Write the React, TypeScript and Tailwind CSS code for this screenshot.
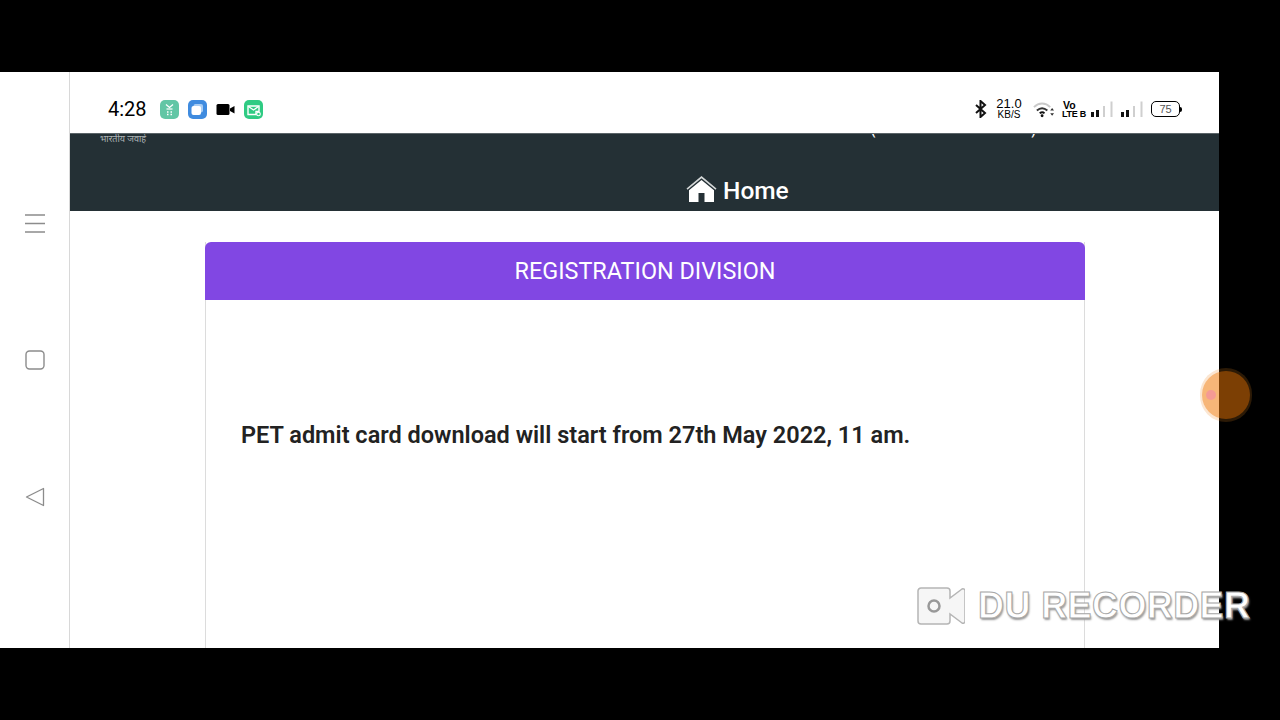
const roboto = "font-['Roboto',sans-serif]";

function AppIcons() {
  return (
    <div className="flex items-center gap-[9px]">
      {/* calculator-ish app */}
      <svg width="19" height="19" viewBox="0 0 19 19">
        <rect width="19" height="19" rx="5" fill="#62c6a5" />
        <path d="M6 4.500l3.500 3 3.500-3" stroke="#fff" strokeWidth="1.300" fill="none" />
        <path d="M6.500 9h6" stroke="#fff" strokeWidth="1.200" />
        <path d="M7 12h1.500M10.500 12H12M7 14.500h1.500M10.500 14.500H12" stroke="#fff" strokeWidth="1.500" />
      </svg>
      <svg width="19" height="19" viewBox="0 0 19 19">
        <rect width="19" height="19" rx="5" fill="#3f8bdf" />
        <rect x="5.500" y="4" width="9.500" height="8.500" rx="2" fill="#a9cdf3" />
        <rect x="3.500" y="6" width="9.500" height="9" rx="2" fill="#fff" />
      </svg>
      <svg width="19" height="19" viewBox="0 0 19 19">
        <rect x="0.500" y="4" width="13" height="11" rx="1.500" fill="#000" />
        <path d="M14 8.500l4.500-2.500v7.500L14 11z" fill="#000" />
      </svg>
      <svg width="19" height="19" viewBox="0 0 19 19">
        <rect width="19" height="19" rx="5" fill="#2fcb83" />
        <path d="M4 6h11v5.500h-3v3H4z" fill="none" stroke="#fff" strokeWidth="1.400" />
        <path d="M4.500 6.500l5 3.500 5-3.500" fill="none" stroke="#fff" strokeWidth="1.300" />
        <circle cx="14.500" cy="14" r="1.800" fill="none" stroke="#fff" strokeWidth="1.100" />
      </svg>
    </div>
  );
}

function Signal() {
  return (
    <svg width="22" height="17" viewBox="0 0 22 17">
      <rect x="0" y="11" width="3" height="5" fill="#111" />
      <rect x="5" y="9" width="3" height="7" fill="#111" />
      <rect x="12" y="5" width="2" height="11" fill="#cfcfcf" />
      <rect x="19.500" y="0.500" width="2" height="15.500" fill="#cfcfcf" />
    </svg>
  );
}

function StatusRight() {
  return (
    <div className="flex items-center">
      <svg width="14" height="18" viewBox="0 0 14 18" className="mr-[8px]">
        <path d="M2 5l9 8-4.500 4V1L11 5l-9 8" fill="none" stroke="#111" strokeWidth="2" />
      </svg>
      <div className="flex flex-col items-center w-[26px] mr-[11px] font-['Liberation_Sans',sans-serif] text-black">
        <span className="text-[13px] leading-[12px]">21.0</span>
        <span className="text-[10px] leading-[10px]">KB/S</span>
      </div>
      <svg width="22" height="17" viewBox="0 0 23 17" className="mr-[7px]">
        <path d="M1 6c5-5 12-5 17 0" fill="none" stroke="#c9c9c9" strokeWidth="2" />
        <path d="M4 9.500c3.500-3 7.500-3 11 0" fill="none" stroke="#333" strokeWidth="2" />
        <path d="M7 12.500c2-1.500 3.500-1.500 5 0" fill="none" stroke="#111" strokeWidth="2" />
        <circle cx="9.500" cy="15" r="1.500" fill="#111" />
        <path d="M20 7l2 2.500h-4zM20 15l2-2.500h-4z" fill="#333" />
      </svg>
      <div className="flex flex-col w-[20px] mr-[9px] font-['Liberation_Sans',sans-serif] font-bold text-black">
        <span className="text-[10.500px] leading-[10px] pl-[1px]">Vo</span>
        <span className="text-[9px] leading-[9px] whitespace-nowrap tracking-[-0.3px]">LTE B</span>
      </div>
      <Signal />
      <div className="w-[8px]" />
      <Signal />
      <div className="ml-[8px] flex items-center">
        <div className="w-[29px] h-[16px] border-[1.500px] border-black rounded-[5px] flex items-center justify-center text-[11px] leading-none text-[#555] font-['Liberation_Sans',sans-serif]">
          75
        </div>
        <div className="w-[2px] h-[5px] bg-black rounded-r-sm" />
      </div>
    </div>
  );
}

function NavRail() {
  return (
    <div className="w-[70px] shrink-0 border-r border-[#d8d8d8] flex flex-col items-center pt-[141px] pb-[141px] justify-between h-full">
      <svg width="20" height="20" viewBox="0 0 20 20">
        <path d="M0 2h20M0 10.500h20M0 19h20" stroke="#8c8c8c" strokeWidth="1.300" />
      </svg>
      <svg width="20" height="20" viewBox="0 0 20 20">
        <rect x="1" y="1" width="18" height="18" rx="3.500" fill="none" stroke="#8c8c8c" strokeWidth="1.400" />
      </svg>
      <svg width="20" height="20" viewBox="0 0 20 20">
        <path d="M18.500 1.500v17L1.500 10z" fill="none" stroke="#8c8c8c" strokeWidth="1.300" strokeLinejoin="round" />
      </svg>
    </div>
  );
}

function SiteHeader() {
  return (
    <div className="h-[78px] bg-[#243035] border-t border-[#5b6468] overflow-hidden flex flex-col">
      <div className="h-[10px] relative">
        <span className="absolute left-[30px] top-[1px] text-[9px] leading-[8px] text-[#aeb4b6] font-['Noto_Sans',sans-serif] whitespace-nowrap">
          भारतीय जवाहे
        </span>
        <span className="absolute left-[801px] -top-[14px] text-[16px] leading-[18px] text-white">(</span>
        <span className="absolute left-[961px] -top-[14px] text-[16px] leading-[18px] text-white">)</span>
      </div>
      <div className="flex items-center pl-[616px] pt-[29px] gap-[6px]">
        <svg width="31" height="26" viewBox="0 0 31 26">
          <path d="M15.500 0L0.500 12.500l1 1.200L15.500 2.200 29.500 13.700l1-1.200z" fill="#d5d8d9" />
          <path d="M15.500 4L3 14.200V26h9.500v-9h6v9H28V14.200z" fill="#fff" />
        </svg>
        <span className={`${roboto} mt-[4px] text-[24.500px] leading-[28px] font-medium text-white`}>Home</span>
      </div>
    </div>
  );
}

function Card() {
  return (
    <div className="pt-[31px] flex-1 min-h-0 flex pl-[135px]">
      <div className="w-[880px] border-x border-[#dcdcdc] h-full">
        <div className={`${roboto} -mx-px h-[58px] pt-[2px] bg-[#8147e3] rounded-t-[6px] flex items-center justify-center text-[23.400px] text-white`}>
          REGISTRATION DIVISION
        </div>
        <p className={`${roboto} pl-[35px] pt-[119px] text-[23.500px] leading-[32px] font-semibold text-[#222]`}>
          PET admit card download will start from 27th May 2022, 11 am.
        </p>
      </div>
    </div>
  );
}

export default function App() {
  return (
    <div className="relative w-[1280px] h-[720px] bg-black overflow-hidden">
      <div className="h-[72px]" />
      <div className="w-[1219px] h-[576px] bg-white flex">
        <NavRail />
        <div className="flex-1 min-w-0 flex flex-col">
          <div className={`${roboto} h-[61px] shrink-0 flex items-center justify-between pt-[13px] pl-[38px] pr-[37px]`}>
            <div className="flex items-center gap-[13px]">
              <span className="text-[20px] text-black">4:28</span>
              <AppIcons />
            </div>
            <StatusRight />
          </div>
          <SiteHeader />
          <Card />
        </div>
      </div>

      {/* recorder overlay */}
      <div className="absolute left-[1200px] top-[368px] w-[52px] h-[54px] rounded-full overflow-hidden flex">
        <div className="w-[19px] h-full bg-[#fbe6d2]" />
        <div className="flex-1 h-full bg-[#2c1a06]" />
        <div className="absolute left-[2px] top-[3px] w-[48px] h-[48px] rounded-full overflow-hidden flex">
          <div className="w-[17px] h-full bg-[#f7b678] flex items-center justify-end">
            <div className="w-[10px] h-[10px] mr-[3px] rounded-full bg-[#f59a94]" />
          </div>
          <div className="flex-1 h-full bg-[#7c3f04]" />
        </div>
      </div>
      <div className="absolute left-[917px] top-[587px] flex items-center gap-[13px]">
        <svg width="48" height="38" viewBox="0 0 48 38">
          <path
            d="M4 1h26a3 3 0 0 1 3 3v7L45 2a2 2 0 0 1 3 2v30a2 2 0 0 1-3 2L33 27v7a3 3 0 0 1-3 3H4a3 3 0 0 1-3-3V4a3 3 0 0 1 3-3z"
            fill="#f6f6f6"
            stroke="#b5b5b5"
            strokeWidth="1.500"
          />
          <circle cx="17" cy="19" r="5.500" fill="none" stroke="#999" strokeWidth="2.500" />
        </svg>
        <span className="font-['Liberation_Sans',sans-serif] font-bold text-[36px] leading-[38px] tracking-[0.4px] text-white [-webkit-text-stroke:1px_#a8a8a8] [text-shadow:1px_2px_2px_#9a9a9a] whitespace-nowrap">
          DU RECORDER
        </span>
      </div>
    </div>
  );
}
